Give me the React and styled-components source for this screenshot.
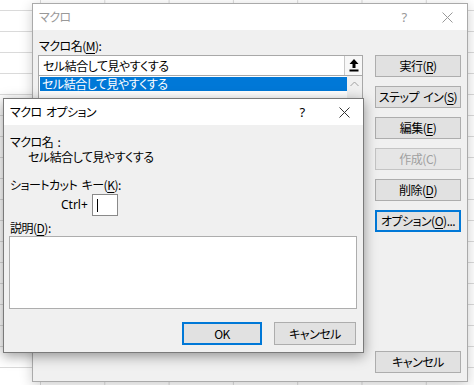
import React from "react";
import styled, { createGlobalStyle } from "styled-components";

const GlobalStyle = createGlobalStyle`
  html, body {
    margin: 0;
    padding: 0;
    background: #fff;
  }
  body {
    font-family: "Noto Sans CJK JP", "Noto Sans", sans-serif;
    font-size: 12px;
    font-feature-settings: "palt";
    letter-spacing: -0.5px;
    word-spacing: 2px;
    color: #000;
  }
`;

const Desktop = styled.div`
  position: relative;
  width: 474px;
  height: 385px;
  overflow: hidden;
  background-color: #fff;
  background-image: linear-gradient(to right, #dadada 1px, transparent 1px),
    linear-gradient(to bottom, #dadada 1px, transparent 1px);
  background-size: 64.3px 21px;
  background-position: 40px 10px;
`;

const Window = styled.div`
  position: absolute;
  left: ${(p) => p.$x}px;
  top: ${(p) => p.$y}px;
  width: ${(p) => p.$w}px;
  height: ${(p) => p.$h}px;
  box-sizing: border-box;
  display: flex;
  flex-direction: column;
  background: #f0f0f0;
  border: 1px solid ${(p) => (p.$active ? "#7a7a7a" : "#aaaaaa")};
  box-shadow: 0 3px 12px rgba(0, 0, 0, ${(p) => (p.$active ? 0.4 : 0.2)});
`;

const TitleBar = styled.div`
  height: 26px;
  flex: none;
  display: flex;
  align-items: center;
  background: #fff;
  padding-left: 6px;
  color: ${(p) => (p.$active ? "#000" : "#999")};
`;

const TitleText = styled.span`
  flex: 1;
  line-height: 16px;
`;

const TitleButton = styled.span`
  width: ${(p) => p.$w}px;
  display: flex;
  justify-content: center;
  align-items: center;
  color: inherit;
  font-family: "Noto Sans", sans-serif;
  font-size: 13px;
`;

const CloseIcon = ({ color }) => (
  <svg width="11" height="11" viewBox="0 0 11 11">
    <path d="M0.5 0.5 L10.5 10.5 M10.5 0.5 L0.5 10.5" stroke={color} strokeWidth="1" fill="none" />
  </svg>
);

const MainBody = styled.div`
  flex: 1;
  display: flex;
  padding: 8px 6px 8px 5px;
  gap: 12px;
`;

const LeftColumn = styled.div`
  width: 325px;
  display: flex;
  flex-direction: column;
`;

const Label = styled.div`
  line-height: 16px;
  padding-left: ${(p) => p.$indent || 1}px;
  margin-top: ${(p) => p.$top || 0}px;
  white-space: nowrap;
`;

const NameInput = styled.div`
  margin-top: 1px;
  height: 21px;
  box-sizing: border-box;
  border: 1px solid #a8a8a8;
  background: #fff;
  display: flex;
  align-items: center;
`;

const NameText = styled.span`
  flex: 1;
  padding-left: 4px;
  line-height: 16px;
`;

const PickButton = styled.span`
  width: 17px;
  height: 19px;
  border-left: 1px solid #c8c8c8;
  background: #f7f7f7;
  display: flex;
  align-items: center;
  justify-content: center;
`;

const ListBox = styled.div`
  height: 240px;
  box-sizing: border-box;
  border: 1px solid #a8a8a8;
  border-top: none;
  background: #fff;
  display: flex;
`;

const ListItems = styled.div`
  flex: 1;
  padding: 1px 0 0 1px;
`;

const ListItem = styled.div`
  height: 14px;
  line-height: 14px;
  padding-left: 2px;
  background: ${(p) => (p.$selected ? "#0078d7" : "transparent")};
  color: ${(p) => (p.$selected ? "#fff" : "#000")};
`;

const ScrollBar = styled.div`
  width: 15px;
  background: #f0f0f0;
  display: flex;
  justify-content: center;
  padding-top: 5px;
`;

const RightColumn = styled.div`
  width: 86px;
  display: flex;
  flex-direction: column;
  padding-top: 17px;
  gap: 9px;
`;

const Button = styled.button`
  width: ${(p) => p.$w || 86}px;
  height: 22px;
  box-sizing: border-box;
  padding: 0;
  margin: 0;
  font: inherit;
  font-feature-settings: "palt";
  letter-spacing: -0.5px;
  word-spacing: 2px;
  line-height: 16px;
  background: #e1e1e1;
  color: #000;
  border: 1px solid ${(p) => (p.$focus ? "#0078d7" : "#adadad")};
  box-shadow: ${(p) => (p.$focus ? "inset 0 0 0 1px #0078d7" : "none")};
  margin-top: ${(p) => (p.$bottom ? "auto" : "0")};
  &:disabled {
    color: #a0a0a0;
    background: #e6e6e6;
    border-color: #c4c4c4;
  }
`;

const OptionBody = styled.div`
  flex: 1;
  display: flex;
  flex-direction: column;
  padding: 9px 6px 6px 5px;
`;

const KeyRow = styled.div`
  display: flex;
  align-items: center;
  gap: 4px;
  padding-left: 52px;
  margin-top: 1px;
`;

const KeyLabel = styled.span`
  font-family: "Noto Sans", sans-serif;
  font-size: 12px;
  letter-spacing: 0;
  line-height: 16px;
`;

const KeyBox = styled.div`
  width: 26px;
  height: 22px;
  box-sizing: border-box;
  border: 1px solid #8a8a8a;
  background: #fff;
  display: flex;
  align-items: center;
  padding-left: 4px;
`;

const Caret = styled.span`
  width: 1px;
  height: 13px;
  background: #000;
`;

const TextArea = styled.div`
  width: 348px;
  height: 73px;
  box-sizing: border-box;
  border: 1px solid #adadad;
  background: #fff;
`;

const ButtonRow = styled.div`
  display: flex;
  justify-content: flex-end;
  gap: 12px;
  margin-top: 13px;
  padding-right: 1px;
  & > button {
    height: 23px;
  }
`;

const U = styled.u`
  text-underline-offset: 2px;
`;

const UpIcon = () => (
  <svg width="10" height="13" viewBox="0 0 10 13">
    <path d="M5 0 L9.5 5 L6.5 5 L6.5 9 L3.5 9 L3.5 5 L0.5 5 Z" fill="#000" />
    <rect x="0.5" y="10.5" width="9" height="2" fill="#000" />
  </svg>
);

const ChevronUp = () => (
  <svg width="9" height="6" viewBox="0 0 9 6">
    <path d="M0.5 5 L4.5 1 L8.5 5" stroke="#a0a0a0" strokeWidth="1" fill="none" />
  </svg>
);

export default function App() {
  const macroName = "セル結合して見やすくする";
  return (
    <>
      <GlobalStyle />
      <Desktop>
        <Window $x={32} $y={3} $w={436} $h={379}>
          <TitleBar>
            <TitleText>マクロ</TitleText>
            <TitleButton $w={46}>?</TitleButton>
            <TitleButton $w={40}>
              <CloseIcon color="#999" />
            </TitleButton>
          </TitleBar>
          <MainBody>
            <LeftColumn>
              <Label>
                マクロ名(<U>M</U>):
              </Label>
              <NameInput>
                <NameText>{macroName}</NameText>
                <PickButton>
                  <UpIcon />
                </PickButton>
              </NameInput>
              <ListBox>
                <ListItems>
                  <ListItem $selected>{macroName}</ListItem>
                </ListItems>
                <ScrollBar>
                  <ChevronUp />
                </ScrollBar>
              </ListBox>
            </LeftColumn>
            <RightColumn>
              <Button>
                実行(<U>R</U>)
              </Button>
              <Button>
                ステップ イン(<U>S</U>)
              </Button>
              <Button>
                編集(<U>E</U>)
              </Button>
              <Button disabled>作成(C)</Button>
              <Button>
                削除(<U>D</U>)
              </Button>
              <Button $focus>
                オプション(<U>O</U>)...
              </Button>
              <Button $bottom>キャンセル</Button>
            </RightColumn>
          </MainBody>
        </Window>

        <Window $active $x={3} $y={98} $w={361} $h={255}>
          <TitleBar $active>
            <TitleText>マクロ オプション</TitleText>
            <TitleButton $w={46}>?</TitleButton>
            <TitleButton $w={38}>
              <CloseIcon color="#333" />
            </TitleButton>
          </TitleBar>
          <OptionBody>
            <Label>マクロ名 :</Label>
            <Label $indent={19} $top={-1}>
              {macroName}
            </Label>
            <Label $top={12}>
              ショートカット キー(<U>K</U>):
            </Label>
            <KeyRow>
              <KeyLabel>Ctrl+</KeyLabel>
              <KeyBox>
                <Caret />
              </KeyBox>
            </KeyRow>
            <Label $top={4}>
              説明(<U>D</U>):
            </Label>
            <TextArea />
            <ButtonRow>
              <Button $w={80} $focus>
                OK
              </Button>
              <Button $w={82}>キャンセル</Button>
            </ButtonRow>
          </OptionBody>
        </Window>
      </Desktop>
    </>
  );
}
